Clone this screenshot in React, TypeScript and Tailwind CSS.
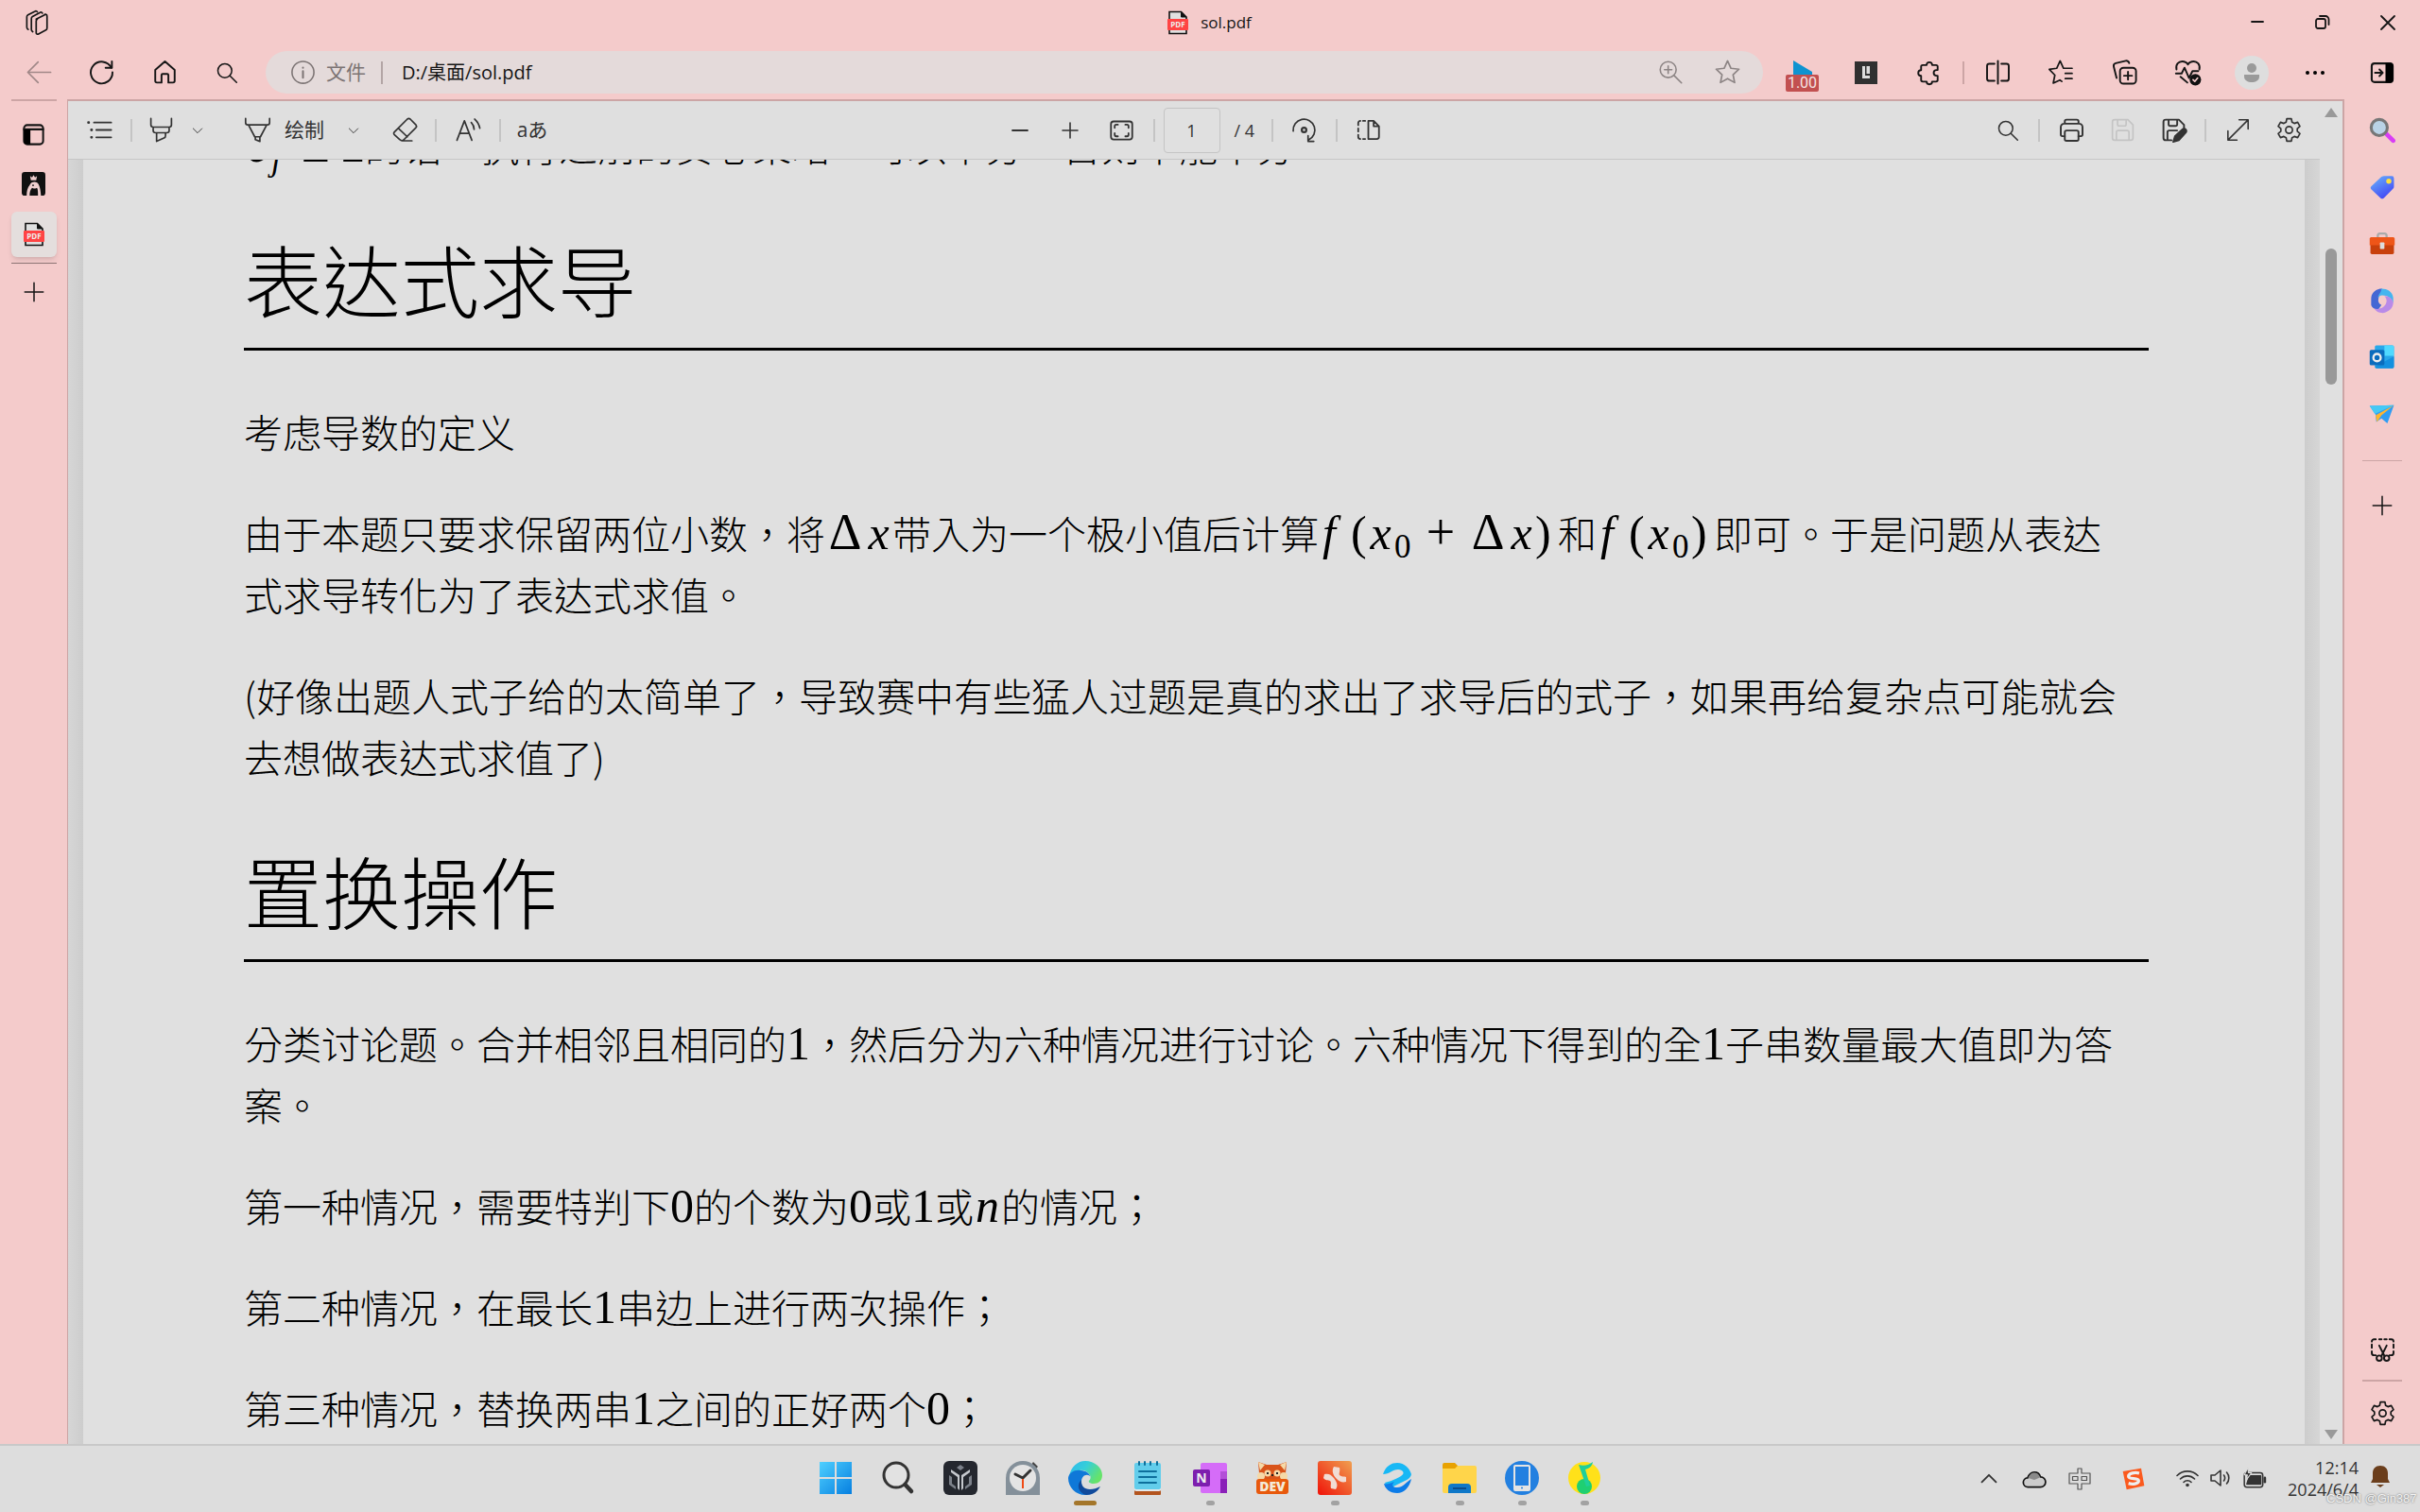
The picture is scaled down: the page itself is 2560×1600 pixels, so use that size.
import React, { ReactNode } from "react";

type IconProps = {
  children: ReactNode;
  className?: string;
};

// Line icons share a 24 unit grid
function Icon({ children, className = "size-[29px]" }: IconProps) {
  return (
    <svg
      viewBox="0 0 24 24"
      fill="none"
      stroke="currentColor"
      strokeWidth="1.4"
      strokeLinecap="round"
      strokeLinejoin="round"
      className={className}
      aria-hidden="true"
    >
      {children}
    </svg>
  );
}

function Art({ children, className = "size-9" }: IconProps) {
  return (
    <svg viewBox="0 0 36 36" className={className} aria-hidden="true">
      {children}
    </svg>
  );
}

type ButtonProps = {
  label: string;
  className: string;
  children: ReactNode;
};

function IconButton({ label, className, children }: ButtonProps) {
  return (
    <button
      type="button"
      aria-label={label}
      className={`flex shrink-0 items-center justify-center ${className}`}
    >
      {children}
    </button>
  );
}

function Divider({ className = "" }: { className?: string }) {
  return <div className={`h-6 w-[2px] shrink-0 bg-[#c4c4c4] ${className}`} />;
}

function Chevron() {
  return (
    <Icon className="size-4">
      <path d="M5 9l7 7 7-7" />
    </Icon>
  );
}

function PdfIcon() {
  return (
    <svg viewBox="0 0 24 26" className="h-[26px] w-6" aria-hidden="true">
      <path
        d="M3 1.5h12.5L21 7v17.5H3z"
        fill="#e0e0e0"
        stroke="#111"
        strokeWidth="1.6"
      />
      <path d="M15.5 1.5V7H21z" fill="#111" stroke="#111" strokeWidth="1" />
      <rect x="1" y="9" width="22" height="12" rx="1" fill="#ff4444" />
      <text
        x="12"
        y="18"
        textAnchor="middle"
        fontSize="8"
        fontWeight="700"
        fontFamily="Open Sans, sans-serif"
        fill="#eee"
      >
        PDF
      </text>
    </svg>
  );
}

function SearchGlyph() {
  return (
    <Icon className="size-[26px]">
      <circle cx="10" cy="10" r="6.8" />
      <path d="M15 15l6.5 6.5" />
    </Icon>
  );
}

function GearGlyph() {
  return (
    <Icon>
      <circle cx="12" cy="12" r="3" />
      <path d="M10 2.2h4l.6 3 2 1.1 2.9-1 2 3.5-2.3 2v2.4l2.3 2-2 3.5-2.9-1-2 1.1-.6 3h-4l-.6-3-2-1.1-2.9 1-2-3.5 2.3-2v-2.4l-2.3-2 2-3.5 2.9 1 2-1.1z" />
    </Icon>
  );
}

function PlusGlyph() {
  return (
    <Icon className="size-[26px]">
      <path d="M12 3v18M3 12h18" />
    </Icon>
  );
}

function TitleBar() {
  return (
    <div className="flex h-12 items-center">
      <div className="flex flex-1 basis-0 pl-[6px]">
        <IconButton label="工作区" className="w-[66px]">
          <Icon>
            <path d="M11 8.5l7-3.6a1.4 1.4 0 0 1 2.5 1v10.5a2 2 0 0 1-1 1.7l-6.5 3.4a1.3 1.3 0 0 1-2-1.1V10a2 2 0 0 1 1-1.5z" />
            <path d="M8 19.5l-.6-.5a2 2 0 0 1-.6-1.4V8a2 2 0 0 1 1-1.8l6.6-3.6a1.4 1.4 0 0 1 2 .6" />
            <path d="M4 17.5l-.6-.5a2 2 0 0 1-.6-1.4V6.500a2 2 0 0 1 1-1.700L10 1.600a1.400 1.400 0 0 1 2 .5" />
          </Icon>
        </IconButton>
      </div>
      <div className="mr-2 flex items-center gap-3 text-[17px] leading-6">
        <PdfIcon />
        <span>sol.pdf</span>
      </div>
      <div className="flex flex-1 basis-0 justify-end">
        <IconButton label="最小化" className="w-[69px]">
          <Icon className="size-6">
            <path d="M6 11h12" strokeWidth="1.800" />
          </Icon>
        </IconButton>
        <IconButton label="还原" className="w-[69px]">
          <Icon className="size-6">
            <rect x="5" y="8" width="10" height="10" rx="2" strokeWidth="1.800" />
            <path d="M9 5h6a3.500 3.500 0 0 1 3.500 3.500V14" strokeWidth="1.800" />
          </Icon>
        </IconButton>
        <IconButton label="关闭" className="w-[69px]">
          <Icon className="size-6">
            <path d="M5 5l14 14M19 5L5 19" strokeWidth="1.800" />
          </Icon>
        </IconButton>
      </div>
    </div>
  );
}

function AddressRow() {
  return (
    <div className="flex h-[57px] items-center">
      <div className="flex pl-2">
        <IconButton label="后退" className="w-[66px] text-[#a08888]">
          <Icon>
            <path d="M22 12H2.500M11 3l-9 9 9 9" />
          </Icon>
        </IconButton>
        <IconButton label="刷新" className="w-[67px]">
          <Icon>
            <path d="M20.500 8A9.500 9.500 0 1 0 21.500 12" strokeWidth="1.600" />
            <path d="M21 2.500V8h-5.500" strokeWidth="1.600" />
          </Icon>
        </IconButton>
        <IconButton label="主页" className="w-[66px]">
          <Icon>
            <path d="M3.500 10L12 2.500l8.500 7.500v9.500a1.500 1.500 0 0 1-1.500 1.500h-4v-6.500a1 1 0 0 0-1-1h-4a1 1 0 0 0-1 1V21H5a1.500 1.500 0 0 1-1.500-1.500z" strokeWidth="1.600" />
          </Icon>
        </IconButton>
        <IconButton label="搜索" className="w-[66px]">
          <SearchGlyph />
        </IconButton>
      </div>
      <div className="ml-2 flex h-[45px] flex-1 items-center rounded-full bg-[#e4dada] pl-[26px]">
        <span className="text-[#7c7474]">
          <Icon className="size-[27px]">
            <circle cx="12" cy="12" r="10.300" />
            <path d="M12 11v6M12 7.500v.2" strokeWidth="1.800" />
          </Icon>
        </span>
        <label htmlFor="url" className="ml-[11px] text-[21px] text-[#7c7474]">
          文件
        </label>
        <div className="mx-4 h-6 w-[2px] bg-[#b3a5a5]" />
        <input
          id="url"
          defaultValue="D:/桌面/sol.pdf"
          className="ml-1 min-w-0 flex-1 bg-transparent text-[20px] outline-none"
        />
        <IconButton label="缩放" className="w-[60px] text-[#8c8484]">
          <Icon className="size-[27px]">
            <circle cx="9.500" cy="9.500" r="7.500" />
            <path d="M15 15l7 7M9.500 6v7M6 9.500h7" />
          </Icon>
        </IconButton>
        <IconButton label="收藏" className="mr-2 w-[60px] text-[#8c8484]">
          <Icon>
            <path d="M12 2l3 6.500 7 .8-5.200 4.800L18.200 21 12 17.500 5.800 21l1.400-6.900L2 9.300l7-.8z" />
          </Icon>
        </IconButton>
      </div>
      <div className="ml-2 flex items-center pr-[2px]">
        <IconButton label="播放速度" className="w-[67px] flex-col">
          <svg viewBox="0 0 24 15" className="mt-2 h-[15px] w-6" aria-hidden="true">
            <path d="M2 0l20 12v3H2z" fill="#0e93d0" />
          </svg>
          <span className="rounded-xs bg-[#c25050] px-[2px] font-['Roboto'] text-base leading-[18px] text-[#f4e4e4]">
            1.00
          </span>
        </IconButton>
        <IconButton label="扩展 LI" className="w-[67px]">
          <span className="flex size-6 items-center justify-center bg-[#303030]">
            <svg viewBox="0 0 24 24" className="size-6" aria-hidden="true">
              <path d="M8 5h3v10h5v3H8zM12.500 5H16v8h-3.500z" fill="#ddd" />
            </svg>
          </span>
        </IconButton>
        <IconButton label="扩展" className="w-[67px]">
          <Icon className="size-[28px]">
            <path d="M9.500 5a2.500 2.500 0 0 1 5 0H18a1.500 1.500 0 0 1 1.500 1.500V9.500h-1a2.600 2.600 0 0 0 0 5.200h1V18.500a1.500 1.500 0 0 1-1.500 1.500h-3.500a2.500 2.500 0 0 1-5 0H6A1.500 1.500 0 0 1 4.500 18.500v-3.700a2.600 2.600 0 0 1 0-5.200V6.500A1.500 1.500 0 0 1 6 5z" strokeWidth="1.600" />
          </Icon>
        </IconButton>
        <div className="mx-[2px] h-6 w-[2px] bg-[#cca5a5]" />
        <IconButton label="拆分屏幕" className="w-[67px]">
          <Icon>
            <path d="M12 2v20M9 4.500H4.500A2 2 0 0 0 2.500 6.500v11a2 2 0 0 0 2 2H9M15 4.500h4.500a2 2 0 0 1 2 2v11a2 2 0 0 1-2 2H15" strokeWidth="1.600" />
          </Icon>
        </IconButton>
        <IconButton label="收藏夹" className="w-[67px]">
          <Icon>
            <path d="M12.500 20l-1.700-1.200L5 21.500l1.400-7L1.500 9.400l6.500-.9L11 2l3 6.500h7.500M15.500 13h6M15.500 17.500h6" />
          </Icon>
        </IconButton>
        <IconButton label="集锦" className="w-[67px]">
          <Icon>
            <rect x="8" y="8" width="14" height="14" rx="3" strokeWidth="1.600" />
            <path d="M15 11.500v7M11.500 15h7M5 17L2.500 7A2.500 2.500 0 0 1 4.300 4L13 2a2.500 2.500 0 0 1 3 2" strokeWidth="1.600" />
          </Icon>
        </IconButton>
        <IconButton label="浏览器概要" className="w-[67px]">
          <Icon>
            <path d="M2 9.500C1 5 4 2.500 7 2.500c2.500 0 4 1 5 2.700 1-1.700 2.500-2.700 5-2.700 3 0 6 2.500 5 7M1.500 13h5L9 8l4 9 3-6h5M5.500 16l6 5" strokeWidth="1.600" />
            <circle cx="18.500" cy="18.500" r="5" fill="#111" stroke="none" />
            <path d="M16.500 18.500l1.500 1.500 2.500-3" stroke="#f4cbcb" />
          </Icon>
        </IconButton>
        <IconButton label="个人资料" className="w-[67px]">
          <span className="flex size-9 items-center justify-center rounded-full bg-[#dedede]">
            <svg viewBox="0 0 24 24" className="size-6" aria-hidden="true">
              <circle cx="12" cy="7" r="5" fill="#9a9a9a" />
              <path d="M4 14h16v2c0 4-4 6-8 6s-8-2-8-6z" fill="#9a9a9a" />
            </svg>
          </span>
        </IconButton>
        <IconButton label="设置及其他" className="w-[67px]">
          <svg viewBox="0 0 24 24" className="size-6" aria-hidden="true">
            <circle cx="4" cy="12" r="2" />
            <circle cx="12" cy="12" r="2" />
            <circle cx="20" cy="12" r="2" />
          </svg>
        </IconButton>
        <IconButton label="侧边栏" className="w-[76px]">
          <Icon className="size-[28px]">
            <rect x="2.500" y="3.500" width="19" height="17" rx="2.500" strokeWidth="1.800" />
            <path d="M15 3h4a3 3 0 0 1 3 3v12a3 3 0 0 1-3 3h-4z" fill="#000" stroke="none" />
            <path d="M5.500 12H12M9.500 9l3 3-3 3" strokeWidth="1.600" />
          </Icon>
        </IconButton>
      </div>
    </div>
  );
}

function TabRail() {
  return (
    <nav className="flex w-[71px] shrink-0 flex-col items-center">
      <div className="h-[2px] w-12 bg-[#cca5a5]" />
      <IconButton label="标签页操作" className="mt-[9px] size-[52px]">
        <Icon className="size-[27px]">
          <rect x="3" y="3" width="18" height="18" rx="3" strokeWidth="1.800" />
          <path d="M3 7h18" strokeWidth="1.800" />
          <path d="M3 7h6v14H5.500A2.500 2.500 0 0 1 3 18.500z" fill="#000" stroke="none" />
        </Icon>
      </IconButton>
      <IconButton label="标签页" className="size-[52px]">
        <svg viewBox="0 0 24 24" className="size-[25px]" aria-hidden="true">
          <rect width="24" height="24" rx="3" fill="#111" />
          <path d="M5 24c0-5 1-8 3-10.500 1-2.500 2.500-3.500 5-3.500 4 0 6 4 6.500 14h-3c0-4 0-6-1-8-1 1-4 1-5 0-2 2-2.500 5-2.500 8z" fill="#f0d0d0" />
          <path d="M8.500 4l2 1.500L12 3l1.500 2.500 2-1.500-.8 4.500H9.300z" fill="#f0d0d0" />
          <circle cx="11.500" cy="13.500" r=".9" fill="#111" />
        </svg>
      </IconButton>
      <IconButton
        label="sol.pdf"
        className="mt-1 size-12 rounded-md bg-[#e4dedd] shadow-md"
      >
        <PdfIcon />
      </IconButton>
      <div className="mt-[6px] h-px w-12 bg-[#8c7474]" />
      <IconButton label="新建标签页" className="mt-1 size-[52px]">
        <PlusGlyph />
      </IconButton>
    </nav>
  );
}

function PdfToolbar() {
  return (
    <div className="flex h-[62px] shrink-0 items-center border-b border-[#c6c6c6] bg-[#dfdfdf] text-[#333]">
      <div className="flex flex-1 basis-0 items-center">
        <IconButton label="目录" className="w-[66px]">
          <Icon>
            <path d="M7 5.500h15M9 12h13M9 18.500h13" strokeWidth="1.600" />
            <path d="M2.200 5.500h.1M4.800 12h.1M4.800 18.500h.1" strokeWidth="2.400" />
          </Icon>
        </IconButton>
        <Divider />
        <IconButton label="突出显示" className="w-[60px]">
          <Icon>
            <path d="M3 2v5.500a2 2 0 0 0 2 2h14a2 2 0 0 0 2-2V2M5 9.500v3a2 2 0 0 0 2 2h10a2 2 0 0 0 2-2v-3M8 14.500V22l6.500-3a2 2 0 0 0 1.300-2v-2.500" />
          </Icon>
        </IconButton>
        <IconButton label="突出显示选项" className="w-[18px]">
          <Chevron />
        </IconButton>
        <button type="button" className="ml-9 flex items-center gap-[11px]">
          <span className="flex w-9 justify-center">
            <Icon>
              <path d="M1.500 2v3.500a2 2 0 0 0 2 2h17a2 2 0 0 0 2-2V2M4 7.500L9.500 18h5L20 7.500M10 18v2.500l4 1.500v-4" />
            </Icon>
          </span>
          <span className="text-[21px]">绘制</span>
        </button>
        <IconButton label="绘制选项" className="ml-[22px] w-[18px]">
          <Chevron />
        </IconButton>
        <IconButton label="擦除" className="ml-[21px] w-12">
          <Icon>
            <path d="M2.500 14L14 2.500a2 2 0 0 1 2.500 0l5 5a2 2 0 0 1 0 2.500L11 20.500a2.500 2.500 0 0 1-3.500 0L2.500 16a1.500 1.500 0 0 1 0-2zM6 10.500l8 7.500M10 21.500h8" />
          </Icon>
        </IconButton>
        <Divider className="ml-2" />
        <IconButton label="大声朗读" className="w-[66px]">
          <Icon>
            <path d="M2 21L8.500 4 15 21M4.300 15h8.400M14.500 5.500a9 9 0 0 1 2.500 6M17.500 2.500a14 14 0 0 1 4.500 8" />
          </Icon>
        </IconButton>
        <Divider />
        <button type="button" aria-label="翻译" className="w-[66px] text-[21px] whitespace-nowrap">
          aあ
        </button>
      </div>
      <div className="flex items-center">
        <IconButton label="缩小" className="w-12">
          <Icon className="size-6">
            <path d="M4 12h16" strokeWidth="1.800" />
          </Icon>
        </IconButton>
        <IconButton label="放大" className="w-[58px]">
          <Icon className="size-6">
            <path d="M12 4v16M4 12h16" strokeWidth="1.600" />
          </Icon>
        </IconButton>
        <IconButton label="适应页面" className="w-[52px]">
          <Icon className="size-[27px]">
            <rect x="2" y="4" width="20" height="17" rx="2.500" strokeWidth="1.600" />
            <path d="M5.500 10V8.500a1.500 1.500 0 0 1 1.500-1.500h1.500M15.500 7H17a1.500 1.500 0 0 1 1.500 1.500V10M18.500 15v1.500A1.500 1.500 0 0 1 17 18h-1.500M8.500 18H7a1.500 1.500 0 0 1-1.500-1.500V15" strokeWidth="1.600" />
          </Icon>
        </IconButton>
        <Divider className="ml-[7px]" />
        <input
          aria-label="页码"
          defaultValue="1"
          className="ml-[9px] h-12 w-[60px] rounded-sm border border-[#c4c4c4] bg-[#e0e0e0] text-center text-lg outline-none"
        />
        <span className="ml-[15px] w-6 text-lg whitespace-nowrap">/ 4</span>
        <Divider className="ml-[15px]" />
        <IconButton label="旋转" className="w-[66px]">
          <Icon>
            <path d="M2.500 13a9.500 9.500 0 1 1 13.500 7.700M15.500 17v5H20.500" />
            <circle cx="12" cy="12" r="2" strokeWidth="1.800" />
          </Icon>
        </IconButton>
        <Divider />
        <IconButton label="页面视图" className="ml-[9px] w-12">
          <Icon className="size-[27px]">
            <path d="M12 3.500h5l5 5V18.500a2 2 0 0 1-2 2h-8zM17 3.500v5h5" strokeWidth="1.600" />
            <path d="M9 3.500H7M4.500 3.500A2 2 0 0 0 2.500 5.500v2M2.500 10.500v3M2.500 16.500v2a2 2 0 0 0 2 2M7 20.500h2" strokeWidth="1.600" />
          </Icon>
        </IconButton>
      </div>
      <div className="flex flex-1 basis-0 items-center justify-end">
        <IconButton label="查找" className="mr-[5px] w-[54px]">
          <SearchGlyph />
        </IconButton>
        <Divider className="mr-[6px]" />
        <IconButton label="打印" className="w-[54px]">
          <Icon>
            <path d="M6 6.500V4.500A1.500 1.500 0 0 1 7.500 3h9A1.500 1.500 0 0 1 18 4.500v2M6 17.500H4A1.500 1.500 0 0 1 2.500 16V9.500A3 3 0 0 1 5.500 6.500h13a3 3 0 0 1 3 3V16a1.500 1.500 0 0 1-1.500 1.500h-2" strokeWidth="1.600" />
            <rect x="6" y="12.500" width="12" height="9" rx="1.500" strokeWidth="1.600" />
          </Icon>
        </IconButton>
        <IconButton label="保存" className="w-[54px] text-[#c4c4c4]">
          <Icon>
            <path d="M5 3h11.500L21 7.500V19a2 2 0 0 1-2 2H5a2 2 0 0 1-2-2V5a2 2 0 0 1 2-2zM7.500 3v4a1.500 1.500 0 0 0 1.500 1.500h4.500A1.500 1.500 0 0 0 15 7V3M6.500 21v-7A1.500 1.500 0 0 1 8 12.500h8a1.500 1.500 0 0 1 1.500 1.500v7" />
          </Icon>
        </IconButton>
        <IconButton label="另存为" className="mr-[6px] w-[54px]">
          <Icon>
            <path d="M10 21H5a2 2 0 0 1-2-2V5a2 2 0 0 1 2-2h11.500L21 7.500v3M7.500 3v4a1.500 1.500 0 0 0 1.500 1.500h4.500A1.500 1.500 0 0 0 15 7V3M6.500 21v-7A1.500 1.500 0 0 1 8 12.500h7" strokeWidth="1.600" />
            <path d="M11.500 22.500l1.500-5 6.500-6a2 2 0 0 1 3 3l-6 6.500z" fill="#333" />
          </Icon>
        </IconButton>
        <Divider className="mr-[6px]" />
        <IconButton label="全屏" className="w-[54px]">
          <Icon className="size-[27px]">
            <path d="M3 21L21 3M13 2.500h8.500V11M2.500 13v8.500H11" />
          </Icon>
        </IconButton>
        <IconButton label="设置" className="mr-[6px] w-[54px]">
          <GearGlyph />
        </IconButton>
      </div>
    </div>
  );
}

function Num({ children }: { children: ReactNode }) {
  return (
    <span className="font-['Liberation_Serif',serif] text-[50px] leading-none">
      {children}
    </span>
  );
}

function Var({ children }: { children: ReactNode }) {
  return (
    <i className="inline-block w-[29px] text-center font-['Liberation_Serif',serif] text-[50px] leading-none">
      {children}
    </i>
  );
}

function Delta() {
  return (
    <span className="inline-block w-[42px] text-center font-['Liberation_Serif',serif] text-[54px] leading-none">
      Δ
    </span>
  );
}

function Sub({ children }: { children: ReactNode }) {
  return (
    <sub className="inline-block w-5 font-['Liberation_Serif',serif] text-[35px] leading-none">
      {children}
    </sub>
  );
}

function Func({ children }: { children: ReactNode }) {
  return (
    <span className="mr-[6px] font-['Liberation_Serif',serif] text-[50px] leading-none">
      <i className="inline-block w-[34px] pl-1">f</i>
      <span className="inline-block w-[17px]">(</span>
      {children}
      <span className="inline-block w-[18px]">)</span>
    </span>
  );
}

function Heading({ children }: { children: ReactNode }) {
  return (
    <h1 className="mt-14 mb-[53px] border-b-[3px] border-black pb-[22px] text-[83px] leading-[104px]">
      {children}
    </h1>
  );
}

function Paragraph({ children }: { children: ReactNode }) {
  return <p className="mb-[42px] leading-[65px]">{children}</p>;
}

function PdfPage() {
  return (
    <div className="flex min-h-0 flex-1 overflow-hidden">
      <div className="w-4 shrink-0 bg-linear-to-r from-[#d6d6d6] to-[#cdcdcd]" />
      <article
        lang="zh-TW"
        className="-mt-12 flex-1 bg-[#e0e0e0] pr-[165px] pl-[170px] font-['Noto_Sans_CJK_TC',sans-serif] text-[41px] font-light whitespace-nowrap text-black"
      >
        <p className="leading-[65px]">
          <Var>c</Var>
          <sub className="inline-block w-5 font-['Liberation_Serif',serif] text-[35px] leading-none italic">
            j
          </sub>
          <span className="inline-block w-[54px] text-center font-['Liberation_Serif',serif] text-[54px] leading-none">
            ≥
          </span>
          <Num>2</Num>
          的话，执行之前的贪心策略，可以平分，否则不能平分
        </p>
        <Heading>表达式求导</Heading>
        <Paragraph>考虑导数的定义</Paragraph>
        <Paragraph>
          由于本题只要求保留两位小数，将
          <Delta />
          <Var>x</Var>
          带入为一个极小值后计算
          <Func>
            <Var>x</Var>
            <Sub>0</Sub>
            <span className="inline-block w-[58px] text-center text-[54px] leading-none">
              +
            </span>
            <Delta />
            <Var>x</Var>
          </Func>
          和
          <Func>
            <Var>x</Var>
            <Sub>0</Sub>
          </Func>
          即可。于是问题从表达
          <br />
          式求导转化为了表达式求值。
        </Paragraph>
        <Paragraph>
          (好像出题人式子给的太简单了，导致赛中有些猛人过题是真的求出了求导后的式子，如果再给复杂点可能就会
          <br />
          去想做表达式求值了)
        </Paragraph>
        <Heading>置换操作</Heading>
        <Paragraph>
          分类讨论题。合并相邻且相同的<Num>1</Num>
          ，然后分为六种情况进行讨论。六种情况下得到的全<Num>1</Num>
          子串数量最大值即为答
          <br />
          案。
        </Paragraph>
        <Paragraph>
          第一种情况，需要特判下<Num>0</Num>的个数为<Num>0</Num>或<Num>1</Num>或
          <Var>n</Var>的情况；
        </Paragraph>
        <Paragraph>
          第二种情况，在最长<Num>1</Num>串边上进行两次操作；
        </Paragraph>
        <Paragraph>
          第三种情况，替换两串<Num>1</Num>之间的正好两个<Num>0</Num>；
        </Paragraph>
      </article>
      <div className="w-4 shrink-0 bg-linear-to-r from-[#cdcdcd] to-[#d6d6d6]" />
    </div>
  );
}

function ScrollBar() {
  return (
    <div className="flex w-6 shrink-0 flex-col items-center bg-[#e0e0e0]">
      <svg viewBox="0 0 14 10" className="mt-[7px] h-[10px] w-[14px]" aria-hidden="true">
        <path d="M7 0l7 10H0z" fill="#999" />
      </svg>
      <div className="mt-[139px] h-[144px] w-3 rounded-full bg-[#999]" />
      <svg viewBox="0 0 14 10" className="mt-auto mb-[5px] h-[10px] w-[14px]" aria-hidden="true">
        <path d="M0 0h14L7 10z" fill="#999" />
      </svg>
    </div>
  );
}

function AppRail() {
  return (
    <aside className="flex w-20 shrink-0 flex-col items-center pt-[3px]">
      <IconButton label="搜索" className="size-[60px]">
        <Art className="size-7">
          <path d="M22 21l11 11" stroke="#d93df5" strokeWidth="6" strokeLinecap="round" />
          <circle cx="14" cy="14" r="11" fill="#b9d3e6" stroke="#777" strokeWidth="4" />
        </Art>
      </IconButton>
      <IconButton label="购物" className="size-[60px]">
        <Art className="size-7">
          <defs>
            <linearGradient id="tag" x1="0" y1="0" x2=".6" y2="1">
              <stop offset="0" stopColor="#6ab8fb" />
              <stop offset="1" stopColor="#4347f5" />
            </linearGradient>
          </defs>
          <path d="M20 3h11a3 3 0 0 1 3 3v11a4 4 0 0 1-1 3L20 33a3 3 0 0 1-4 0L3 21a3 3 0 0 1 0-4L17 4z" fill="url(#tag)" />
          <circle cx="27" cy="10" r="3.500" fill="#ffdf3d" />
        </Art>
      </IconButton>
      <IconButton label="工具" className="size-[60px]">
        <Art className="size-7">
          <path d="M12 11V7a3 3 0 0 1 3-3h6a3 3 0 0 1 3 3v4" fill="none" stroke="#aaa" strokeWidth="3" />
          <rect x="2" y="17" width="32" height="15" rx="2" fill="#c8400c" />
          <path d="M3 9h30a2 2 0 0 1 2 2v9H1v-9a2 2 0 0 1 2-2z" fill="#ee5518" />
          <rect x="15" y="16" width="6" height="9" rx="1" fill="#ddd" />
        </Art>
      </IconButton>
      <IconButton label="Microsoft 365" className="size-[60px]">
        <Art className="size-7">
          <path d="M15 2C7 4 3 9 3 16v8c1 4 5 6 10 6l4-6c-4-2-5-5-4-9 1-5 5-7 5-13z" fill="#4467d4" />
          <path d="M17 2c8 0 15 4 16 12v8c-2-7-7-11-15-11-3 0-5 2-6 4C13 9 17 7 17 2z" fill="#45b5ef" />
          <path d="M33 21c0 7-6 13-14 14-6 0-9-2-12-6 8 2 16-2 17-10 0-3-1-5-3-7 7 0 11 4 12 9z" fill="#b98ae8" />
        </Art>
      </IconButton>
      <IconButton label="Outlook" className="size-[60px]">
        <Art className="size-7">
          <rect x="8" y="2" width="26" height="31" rx="2" fill="#28a8ea" />
          <path d="M21 2h11a2 2 0 0 1 2 2v12H21z" fill="#50d9ff" />
          <path d="M8 31l26-14v14a2 2 0 0 1-2 2H10z" fill="#1490df" />
          <rect x="1" y="8" width="20" height="21" rx="2" fill="#0a6cbd" />
          <circle cx="11" cy="18.500" r="5" fill="none" stroke="#eee" strokeWidth="3" />
        </Art>
      </IconButton>
      <IconButton label="Drop" className="size-[60px]">
        <Art className="size-7">
          <path d="M1 7l33-1-9 25-8-7-7 5-1-10z" fill="#2f9df4" />
          <path d="M34 6L9 20l2 9 6-9z" fill="#ffb52e" />
          <path d="M1 7l33-1L8 18z" fill="#45c9f5" />
        </Art>
      </IconButton>
      <div className="mt-[19px] h-px w-[42px] bg-[#cca5a5]" />
      <IconButton label="自定义" className="mt-[17px] size-[60px]">
        <PlusGlyph />
      </IconButton>
      <IconButton label="屏幕截图" className="mt-auto size-[60px]">
        <Icon>
          <path d="M6 17.500H4.500a2 2 0 0 1-2-2V14M2.500 11V8M2.500 5.500a2 2 0 0 1 2-2H6M9 3.500h2M13.500 3.500h2M18 3.500h1.500a2 2 0 0 1 2 2M21.500 8v3M21.500 14v1.500a2 2 0 0 1-2 2H18M9 9l4.500 9M15.500 9L11 18" strokeWidth="1.600" />
          <circle cx="9" cy="20" r="2.300" strokeWidth="1.600" />
          <circle cx="15.500" cy="20" r="2.300" strokeWidth="1.600" />
        </Icon>
      </IconButton>
      <div className="my-[3px] h-[2px] w-[42px] bg-[#cca5a5]" />
      <IconButton label="设置" className="mb-[3px] size-[60px]">
        <GearGlyph />
      </IconButton>
    </aside>
  );
}

type TaskProps = {
  label: string;
  mark?: "dot" | "active";
  children: ReactNode;
};

function TaskItem({ label, mark, children }: TaskProps) {
  return (
    <button
      type="button"
      aria-label={label}
      className="flex h-[58px] w-[66px] flex-col items-center pt-1"
    >
      <Art>{children}</Art>
      {mark === "dot" && (
        <span className="mt-[6px] h-[5px] w-[9px] rounded-full bg-[#a2a2a2]" />
      )}
      {mark === "active" && (
        <span className="mt-[6px] h-[5px] w-6 rounded-full bg-[#a4762a]" />
      )}
    </button>
  );
}

function Taskbar() {
  return (
    <footer className="flex h-[72px] shrink-0 items-start border-t-2 border-[#c8c8c8] bg-[#dddddd] pt-3">
      <div className="flex-1 basis-0" />
      <div className="flex">
        <TaskItem label="开始">
          <defs>
            <linearGradient id="win" x1="0" y1="0" x2="1" y2="1">
              <stop offset="0" stopColor="#4fd0ff" />
              <stop offset="1" stopColor="#067fe0" />
            </linearGradient>
          </defs>
          <path d="M1 1h16v16H1zM19 1h16v16H19zM1 19h16v16H1zM19 19h16v16H19z" fill="url(#win)" />
        </TaskItem>
        <TaskItem label="搜索">
          <circle cx="16" cy="15" r="13" fill="#e2e2e2" stroke="#333" strokeWidth="3" />
          <path d="M25.500 25l6.500 7" stroke="#333" strokeWidth="4.500" strokeLinecap="round" />
        </TaskItem>
        <TaskItem label="加速器">
          <rect x="0" y="0" width="36" height="36" rx="6" fill="#24272e" />
          <path d="M8 9l9 6v16l-2-2V17l-7-5zM28 9l-9 6v16l2-2V17l7-5z" fill="#c5c8cd" />
          <path d="M14 7l4-3 4 3-4 3zM6 15l3 2v7l4 3v3l-7-5zM30 15l-3 2v7l-4 3v3l7-5z" fill="#7c818a" />
        </TaskItem>
        <TaskItem label="时钟">
          <path d="M29 1l5 5-3 3-4-5z" fill="#444" />
          <path d="M0 36V18a18 18 0 0 1 36 0v18z" fill="#84909a" />
          <circle cx="18" cy="18" r="14" fill="#e4e4e4" />
          <path d="M10 14l8 4 8-8" fill="none" stroke="#333" strokeWidth="3" strokeLinecap="round" />
          <path d="M18 19v10" stroke="#f04a14" strokeWidth="2" />
        </TaskItem>
        <TaskItem label="Microsoft Edge" mark="active">
          <defs>
            <linearGradient id="edgeTop" x1="0" y1="0" x2="1" y2=".5">
              <stop offset="0" stopColor="#2cb6f0" />
              <stop offset=".5" stopColor="#36cfd8" />
              <stop offset="1" stopColor="#66e36a" />
            </linearGradient>
          </defs>
          <path d="M1 16C3 6 10 0 18 0c10 0 18 7 18 15 0 6-4 9-9 9-4 0-6-2-5-3 2-2 2-4 1-6-4-7-15-7-22 1z" fill="url(#edgeTop)" />
          <path d="M0 18c1-6 7-9 13-8 6 0 10 4 10 6-4-3-9 0-9 6 0 8 6 13 12 12-2 1-5 2-8 2C8 36 0 28 0 18z" fill="#0f78d8" />
          <path d="M14 20c-1 6 3 10 9 10 4 0 7-1 11-3-3 6-9 9-15 9-8-2-11-11-5-16z" fill="#104a9c" />
        </TaskItem>
        <TaskItem label="记事本">
          <rect x="4" y="31" width="28" height="5" rx="1" fill="#b3541e" />
          <rect x="4" y="2" width="28" height="30" rx="2" fill="#e2e8ea" />
          <rect x="4" y="2" width="28" height="28" rx="2" fill="#62cdeb" />
          <path d="M9 11h18M9 17h18M9 23h18M9 1v3M15 1v3M21 1v3M28 1v3" stroke="#0d6f9c" strokeWidth="2" strokeLinecap="round" />
        </TaskItem>
        <TaskItem label="OneNote" mark="dot">
          <rect x="8" y="2" width="28" height="32" rx="2" fill="#d56cf8" />
          <path d="M29 11h7v8h-7z" fill="#b34fd8" />
          <path d="M29 19h7v15h-7z" fill="#8a20b8" />
          <rect x="0" y="9" width="18" height="18" rx="2" fill="#7d1fae" />
          <text x="9" y="23" textAnchor="middle" fontSize="14" fontWeight="700" fontFamily="Open Sans, sans-serif" fill="#eee">
            N
          </text>
        </TaskItem>
        <TaskItem label="Dev-C++">
          <path d="M3 1l9 3h12l9-3-1 12-3 8H7L4 13z" fill="#d9541a" />
          <path d="M3 1l7 3-5 6zM33 1l-7 3 5 6z" fill="#f5d9a8" />
          <circle cx="13" cy="13" r="3.500" fill="#f5d9a8" />
          <circle cx="23" cy="13" r="3.500" fill="#f5d9a8" />
          <path d="M13 12v2M23 12v2M17 15h2" stroke="#222" strokeWidth="2" />
          <circle cx="6" cy="16" r="4" fill="#f5d9a8" />
          <circle cx="30" cy="16" r="4" fill="#f5d9a8" />
          <rect x="1" y="19" width="34" height="16" rx="3" fill="#e8590c" />
          <text x="18" y="32" textAnchor="middle" fontSize="14" fontWeight="800" fontFamily="Open Sans, sans-serif" fill="#f4ead8">
            DEV
          </text>
        </TaskItem>
        <TaskItem label="Xmind" mark="dot">
          <defs>
            <linearGradient id="xmind" x1="1" y1="0" x2="0" y2="1">
              <stop offset="0" stopColor="#f0a050" />
              <stop offset="1" stopColor="#f01208" />
            </linearGradient>
          </defs>
          <rect width="36" height="36" rx="3" fill="url(#xmind)" />
          <path d="M17 6l6 1c1 4-1 6 0 8 2 2 5 1 7 2v5c-4 1-7 0-10-3s-6-8-3-13z" fill="#f1dcd4" />
          <path d="M6 18l1-4c4-1 7 0 10 4s5 8 2 12l-5-1c-1-4 1-6-1-8-2-1-5 0-7-3z" fill="#f1dcd4" />
        </TaskItem>
        <TaskItem label="浏览器">
          <path d="M3 14C6 5 12 2 18 2c8 0 13 6 15 12-1 5-5 6-11 9l-10 5c-2 1-6-1-7-5 4-1 10-3 17-7 5-3 2-7-3-7-6 0-9 5-16 5z" fill="#18b8f5" />
          <path d="M33 19c-2 9-8 15-15 15C10 34 5 29 4 24c3 1 6 0 11-2-4 4-1 6 3 6 6 0 9-5 15-9z" fill="#0c7ce8" />
        </TaskItem>
        <TaskItem label="文件资源管理器" mark="dot">
          <path d="M0 4a2 2 0 0 1 2-2h11l4 4v4H0z" fill="#e8a202" />
          <path d="M0 8h13l3-3h18a2 2 0 0 1 2 2v25a2 2 0 0 1-2 2H2a2 2 0 0 1-2-2z" fill="#ffd54a" />
          <path d="M6 34V28a4 4 0 0 1 4-4h16a4 4 0 0 1 4 4v6z" fill="#0f78c8" />
          <path d="M11 29h14" stroke="#0a4c8c" strokeWidth="2" />
        </TaskItem>
        <TaskItem label="手机助手" mark="dot">
          <circle cx="18" cy="18" r="18" fill="#2380e0" />
          <rect x="10" y="5" width="16" height="26" rx="1" fill="none" stroke="#e4e4e4" strokeWidth="2" />
          <path d="M10 26h16v5H10z" fill="#e4e4e4" />
          <circle cx="18" cy="28.500" r="1" fill="#2380e0" />
        </TaskItem>
        <TaskItem label="QQ音乐" mark="dot">
          <circle cx="18" cy="18" r="17" fill="#ffe11a" />
          <circle cx="18" cy="27" r="8" fill="#1fcf72" />
          <path d="M12 4c6 2 11 0 15-3-1 5-4 7-8 8l5 17-4 1z" fill="#1fcf9a" />
        </TaskItem>
      </div>
      <div className="flex flex-1 basis-0 items-start justify-end text-[#333]">
        <div className="flex h-[46px] items-center">
          <IconButton label="显示隐藏的图标" className="w-12">
            <Icon className="size-5">
              <path d="M3 16l9-9 9 9" strokeWidth="2.200" />
            </Icon>
          </IconButton>
          <IconButton label="OneDrive" className="w-12">
            <Icon className="size-[26px]">
              <path d="M6 20a4.500 4.500 0 0 1-.5-9C7 7 9.500 5.500 12 5.500c3 0 5 1.500 6 4.500 3 0 5 2.500 5 5s-2 5-5 5z" fill="#ccc" stroke="#111" strokeWidth="1.600" />
              <path d="M6 11c1.500-3.500 3.500-5 6-5s4.500 1.500 5.500 4.500L12 13z" fill="#8a8a8a" stroke="none" />
            </Icon>
          </IconButton>
          <button type="button" aria-label="输入法 中" className="flex w-12 justify-center text-[#555]">
            <Icon className="size-6">
              <path d="M10 1h4v5h9v11h-9v6h-4v-6H1V6h9zM4.500 9.500H10v4H4.500zM14 9.500h5.500v4H14z" strokeWidth="1.200" />
            </Icon>
          </button>
          <IconButton label="搜狗输入法" className="w-[66px]">
            <Art className="size-6">
              <path d="M1 6L30 1l5 28-28 6z" fill="#fb5a1e" />
              <path d="M27 9c-7-2-17 0-17 5 0 6 16 1 16 7 0 5-10 6-16 4" fill="none" stroke="#eee" strokeWidth="5" />
            </Art>
          </IconButton>
          <button type="button" aria-label="网络、音量和电池" className="ml-3 flex gap-[11px]">
            <Icon className="size-6">
              <path d="M1 9.500a15.500 15.500 0 0 1 22 0M4.500 13a10.500 10.500 0 0 1 15 0M8 16.500a5.500 5.500 0 0 1 8 0" strokeWidth="1.600" />
              <circle cx="12" cy="19.500" r="1.800" fill="#333" stroke="none" />
            </Icon>
            <Icon className="size-6">
              <path d="M2 9h4l6-5v16l-6-5H2zM15.500 9a5 5 0 0 1 0 6M18.500 6a9 9 0 0 1 0 12" strokeWidth="1.600" />
            </Icon>
            <Icon className="size-[26px]">
              <rect x="2" y="6" width="18" height="14" rx="2.500" />
              <path d="M22 11v4" strokeWidth="2.500" />
              <path d="M7 9h11v8H4.500z" fill="#333" />
              <path d="M5.500 1L2 8h3l-1 5 5-7H6z" fill="#333" stroke="#ddd" strokeWidth="1" />
            </Icon>
          </button>
        </div>
        <div className="relative ml-[22px] flex w-[140px] items-start">
          <time className="w-[75px] text-right text-[18px] leading-[23px] whitespace-nowrap">
            12:14
            <br />
            2024/6/4
          </time>
          <button type="button" aria-label="通知" className="ml-[13px] pt-2">
            <svg viewBox="0 0 20 24" className="h-6 w-5" aria-hidden="true">
              <path d="M10 1c5 0 8 3 8 8v6l2 4H0l2-4V9c0-5 3-8 8-8zM6 21h8l-4 3z" fill="#6b3e1c" />
            </svg>
          </button>
          <span className="absolute top-9 left-[41px] font-['Liberation_Sans'] text-[13px] leading-4 whitespace-nowrap text-[#f4f4f4] [text-shadow:0_0_2px_#555]">
            CSDN @Gin387
          </span>
        </div>
      </div>
    </footer>
  );
}

export default function App() {
  return (
    <div
      lang="zh-CN"
      className="flex h-screen flex-col overflow-hidden bg-[#f4cbcb] font-['Open_Sans','Noto_Sans_CJK_SC',sans-serif] text-[#151515]"
    >
      <header>
        <TitleBar />
        <AddressRow />
      </header>
      <div className="flex min-h-0 flex-1">
        <TabRail />
        <main className="flex min-w-0 flex-1 border-t-2 border-r-2 border-l border-[#cca5a5]">
          <div className="flex min-w-0 flex-1 flex-col">
            <PdfToolbar />
            <PdfPage />
          </div>
          <ScrollBar />
        </main>
        <AppRail />
      </div>
      <Taskbar />
    </div>
  );
}
